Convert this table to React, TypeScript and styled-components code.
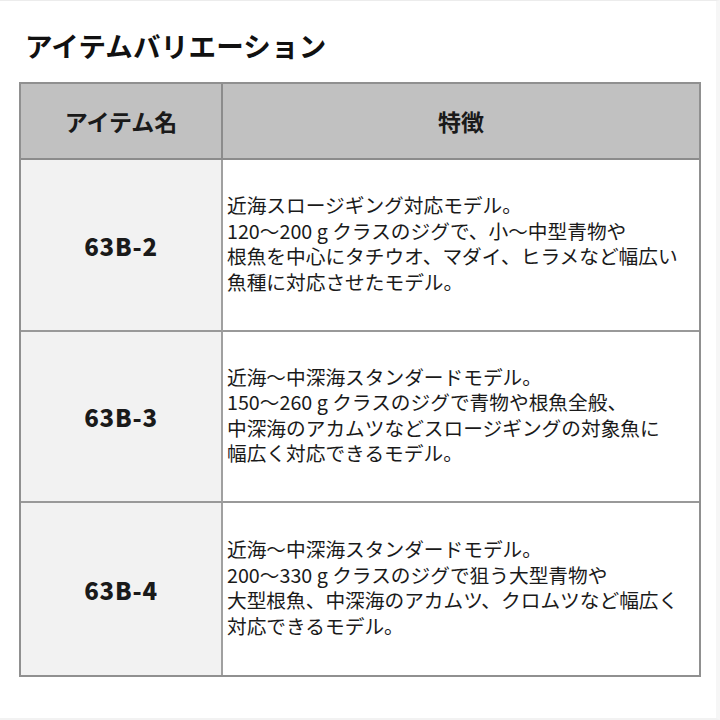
import React from "react";
import styled, { createGlobalStyle } from "styled-components";

const Global = createGlobalStyle`
  html, body { margin: 0; padding: 0; background: #fff; }
  body { font-family: "Noto Sans CJK JP", "Noto Sans", sans-serif; color: #1a1a1a; }
`;

const Frame = styled.div`
  width: 720px;
  height: 720px;
  box-sizing: border-box;
  border-top: 1px solid #ececec;
  border-right: 4px solid #f6f6f6;
  border-bottom: 2px solid #f2f2f2;
  padding: 28px 0 0 19px;
  display: flex;
  flex-direction: column;
`;

const Title = styled.h1`
  margin: 0 0 0 6px;
  font-size: 27.5px;
  line-height: 32px;
  font-weight: 700;
  color: #111;
  height: 53px;
  letter-spacing: 0.2px;
`;

const Table = styled.div`
  width: 682px;
  display: grid;
  grid-template-columns: 202px 1fr;
  grid-template-rows: 76px 172px 171px 172px;
  border: 2px solid #909090;
  box-sizing: border-box;
`;

const HeadCell = styled.div<{ $last?: boolean }>`
  background: #c1c1c1;
  display: flex;
  align-items: center;
  justify-content: center;
  font-size: 23px;
  font-weight: 700;
  color: #1a1a1a;
  border-right: ${(p) => (p.$last ? "none" : "2px solid #8c8c8c")};
  border-bottom: 2px solid #8c8c8c;
`;

const NameCell = styled.div<{ $last?: boolean }>`
  background: #f2f2f2;
  display: flex;
  align-items: center;
  justify-content: center;
  font-size: 24px;
  font-weight: 800;
  letter-spacing: 0.8px;
  color: #1a1a1a;
  border-right: 2px solid #a0a0a0;
  border-bottom: ${(p) => (p.$last ? "none" : "2px solid #999")};
`;

const DescCell = styled.div<{ $last?: boolean }>`
  background: #fff;
  display: flex;
  flex-direction: column;
  justify-content: center;
  padding-left: 4px;
  padding-bottom: 4px;
  font-size: 19.7px;
  line-height: 25.5px;
  color: #1a1a1a;
  border-bottom: ${(p) => (p.$last ? "none" : "2px solid #999")};
`;

const Line = styled.div`
  white-space: nowrap;
`;

const rows = [
  {
    name: "63B-2",
    lines: [
      "近海スロージギング対応モデル。",
      "120～200 g クラスのジグで、小～中型青物や",
      "根魚を中心にタチウオ、マダイ、ヒラメなど幅広い",
      "魚種に対応させたモデル。",
    ],
  },
  {
    name: "63B-3",
    lines: [
      "近海～中深海スタンダードモデル。",
      "150～260 g クラスのジグで青物や根魚全般、",
      "中深海のアカムツなどスロージギングの対象魚に",
      "幅広く対応できるモデル。",
    ],
  },
  {
    name: "63B-4",
    lines: [
      "近海～中深海スタンダードモデル。",
      "200～330 g クラスのジグで狙う大型青物や",
      "大型根魚、中深海のアカムツ、クロムツなど幅広く",
      "対応できるモデル。",
    ],
  },
];

export default function App() {
  return (
    <>
      <Global />
      <Frame>
        <Title>アイテムバリエーション</Title>
        <Table>
          <HeadCell>アイテム名</HeadCell>
          <HeadCell $last>特徴</HeadCell>
          {rows.map((r, i) => (
            <React.Fragment key={r.name}>
              <NameCell $last={i === rows.length - 1}>{r.name}</NameCell>
              <DescCell $last={i === rows.length - 1}>
                {r.lines.map((l) => (
                  <Line key={l}>{l}</Line>
                ))}
              </DescCell>
            </React.Fragment>
          ))}
        </Table>
      </Frame>
    </>
  );
}
